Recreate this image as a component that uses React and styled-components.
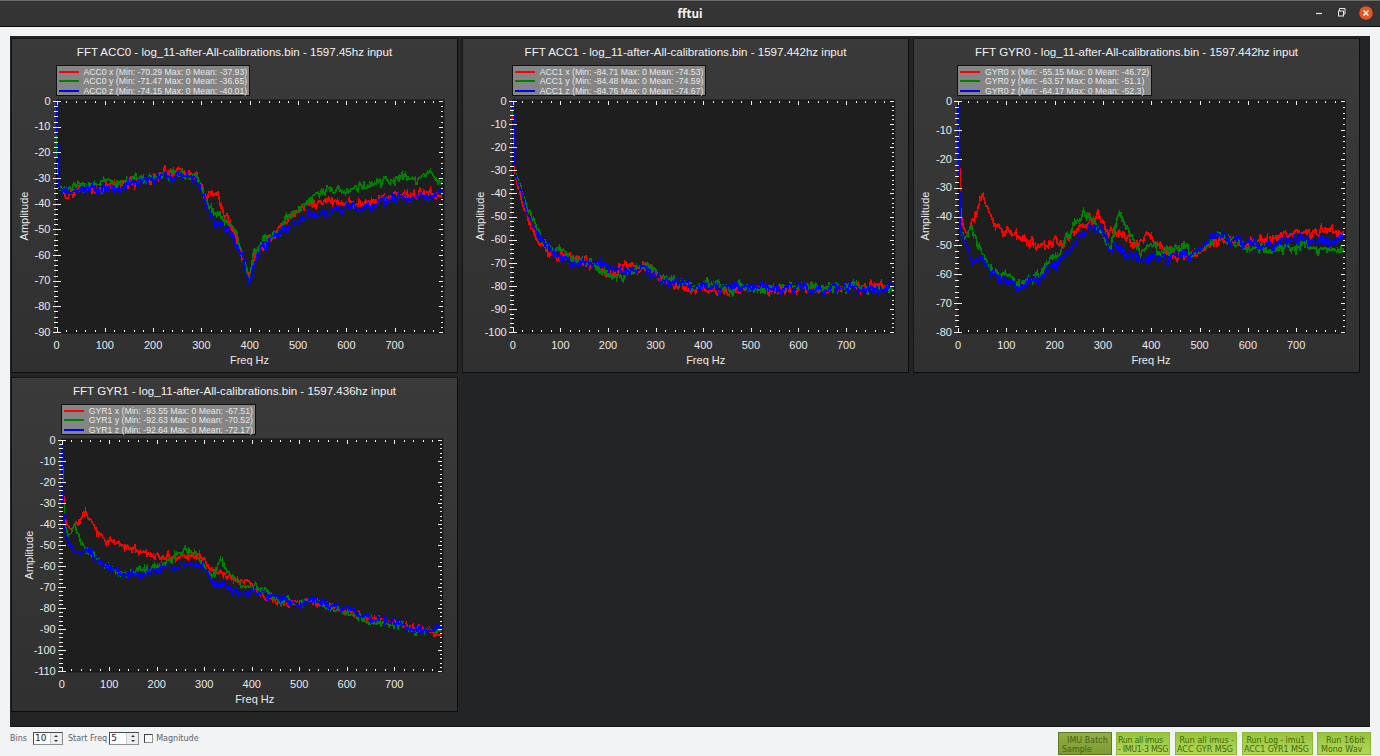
import React from "react";
import styled, { createGlobalStyle } from "styled-components";

const GlobalStyle = createGlobalStyle`
  html, body { margin: 0; padding: 0; background: #f2f3f5; overflow: hidden; }
  * { box-sizing: border-box; }
`;

const RED = "#ff0000";
const GREEN = "#008000";
const BLUE = "#0000ff";

const CHARTS = [
  {
    name: "ACC0",
    title: "FFT ACC0 - log_11-after-All-calibrations.bin - 1597.45hz input",
    plotLeft: 44.5,
    plotWidth: 386.5,
    minDb: -90,
    noise: 2,
    legend: [
      "ACC0 x (Min: -70.29 Max: 0 Mean: -37.93)",
      "ACC0 y (Min: -71.47 Max: 0 Mean: -36.65)",
      "ACC0 z (Min: -74.15 Max: 0 Mean: -40.01)",
    ],
    red: [[0, 0], [2, -20], [6, -34], [20, -37], [60, -34], [120, -33], [200, -30], [250, -26], [290, -30], [310, -37], [333, -35], [345, -43], [370, -50], [385, -60], [398, -69], [410, -60], [430, -55], [470, -47], [520, -40], [560, -38], [620, -40], [700, -37], [790, -36]],
    green: [[0, 0], [2, -25], [6, -33], [20, -35], [60, -33], [120, -31], [200, -30], [255, -28], [290, -29], [310, -38], [330, -44], [370, -50], [385, -59], [398, -70], [410, -60], [430, -55], [470, -48], [510, -40], [557, -34], [600, -35], [650, -32], [700, -31], [750, -30], [774, -27], [790, -31]],
    blue: [[0, 0], [2, -15], [6, -34], [20, -36], [60, -34], [120, -33], [200, -31], [255, -28], [290, -30], [310, -40], [325, -47], [360, -53], [385, -60], [399, -73], [412, -62], [429, -56], [470, -51], [499, -47], [560, -43], [636, -41], [700, -38], [790, -36]],
  },
  {
    name: "ACC1",
    title: "FFT ACC1 - log_11-after-All-calibrations.bin - 1597.442hz input",
    plotLeft: 49.7,
    plotWidth: 381,
    minDb: -100,
    noise: 2.2,
    legend: [
      "ACC1 x (Min: -84.71 Max: 0 Mean: -74.53)",
      "ACC1 y (Min: -84.48 Max: 0 Mean: -74.59)",
      "ACC1 z (Min: -84.76 Max: 0 Mean: -74.67)",
    ],
    red: [[0, 0], [3, -18], [6, -34], [15, -40], [30, -50], [50, -60], [75, -65], [100, -67], [150, -69], [200, -74], [220, -75], [238, -69], [250, -70], [262, -73], [275, -71], [300, -75], [340, -79], [400, -81], [500, -81], [600, -81], [700, -81], [790, -80]],
    green: [[0, 0], [3, -14], [6, -31], [15, -36], [30, -47], [50, -56], [75, -63], [100, -65], [150, -69], [200, -75], [225, -77], [250, -74], [280, -70], [310, -75], [350, -79], [400, -80], [500, -81], [600, -80], [700, -81], [790, -81]],
    blue: [[0, 0], [3, -8], [6, -32], [15, -38], [30, -48], [50, -57], [75, -63], [100, -67], [150, -70], [200, -72], [225, -75], [240, -72], [260, -73], [275, -71], [300, -76], [340, -80], [400, -81], [500, -81], [600, -81], [700, -81], [790, -81]],
  },
  {
    name: "GYR0",
    title: "FFT GYR0 - log_11-after-All-calibrations.bin - 1597.442hz input",
    plotLeft: 44,
    plotWidth: 386.5,
    minDb: -80,
    noise: 2,
    legend: [
      "GYR0 x (Min: -55.15 Max: 0 Mean: -46.72)",
      "GYR0 y (Min: -63.57 Max: 0 Mean: -51.1)",
      "GYR0 z (Min: -64.17 Max: 0 Mean: -52.3)",
    ],
    red: [[0, 0], [3, -20], [6, -40], [15, -46], [30, -42], [40, -38], [52, -32], [62, -38], [80, -43], [110, -46], [150, -49], [180, -50], [200, -48], [220, -50], [240, -44], [270, -42], [290, -40], [310, -45], [340, -45], [360, -49], [390, -46], [420, -50], [460, -53], [490, -53], [520, -50], [540, -47], [600, -49], [650, -47], [700, -46], [790, -45]],
    green: [[0, 0], [3, -30], [6, -44], [15, -48], [28, -44], [40, -51], [55, -55], [70, -58], [100, -61], [130, -62], [170, -61], [185, -55], [210, -53], [230, -46], [260, -39], [275, -39], [290, -44], [315, -50], [332, -39], [350, -44], [375, -52], [395, -50], [420, -54], [465, -49], [480, -54], [510, -50], [540, -46], [600, -51], [700, -51], [790, -51]],
    blue: [[0, 0], [3, -30], [6, -45], [20, -52], [30, -56], [50, -54], [65, -59], [90, -61], [120, -63], [170, -62], [200, -57], [225, -54], [240, -48], [270, -44], [295, -43], [315, -52], [330, -50], [345, -55], [400, -55], [450, -54], [480, -54], [520, -49], [540, -46], [600, -50], [700, -48], [790, -48]],
  },
  {
    name: "GYR1",
    title: "FFT GYR1 - log_11-after-All-calibrations.bin - 1597.436hz input",
    plotLeft: 49.7,
    plotWidth: 380,
    minDb: -110,
    noise: 1.8,
    legend: [
      "GYR1 x (Min: -93.55 Max: 0 Mean: -67.51)",
      "GYR1 y (Min: -92.63 Max: 0 Mean: -70.52)",
      "GYR1 z (Min: -92.64 Max: 0 Mean: -72.17)",
    ],
    red: [[0, 0], [3, -20], [6, -38], [15, -42], [25, -41], [40, -38], [50, -34], [60, -38], [75, -43], [90, -47], [110, -49], [150, -52], [170, -53], [200, -55], [210, -56], [230, -56], [240, -55], [280, -55], [300, -57], [310, -60], [320, -63], [335, -62], [350, -65], [385, -66], [400, -69], [420, -73], [460, -76], [480, -78], [520, -76], [560, -78], [620, -83], [660, -85], [700, -87], [750, -90], [790, -92]],
    green: [[0, 0], [3, -25], [6, -40], [15, -46], [28, -41], [40, -50], [55, -54], [70, -55], [90, -60], [110, -62], [140, -63], [170, -62], [200, -60], [220, -59], [260, -52], [280, -53], [300, -60], [320, -64], [333, -57], [350, -63], [380, -69], [410, -71], [450, -75], [465, -76], [490, -78], [525, -75], [560, -79], [620, -84], [660, -87], [700, -88], [740, -91], [790, -90]],
    blue: [[0, 0], [3, -30], [6, -42], [15, -50], [25, -53], [40, -54], [55, -52], [70, -56], [90, -59], [110, -61], [150, -64], [170, -65], [200, -62], [230, -61], [250, -59], [290, -59], [310, -64], [320, -69], [335, -69], [360, -73], [390, -73], [420, -73], [460, -76], [500, -79], [530, -76], [560, -78], [620, -82], [660, -85], [700, -87], [740, -90], [790, -90]],
  },
];

const PLOT_TOP = 5;
const PLOT_HEIGHT = 231;

// small seeded generator so the traces look the same on every load
const makeRandom = (seed) => () => {
  seed = (seed + 0x6d2b79f5) | 0;
  let t = Math.imul(seed ^ (seed >>> 15), 1 | seed);
  t = (t + Math.imul(t ^ (t >>> 7), 61 | t)) ^ t;
  return ((t ^ (t >>> 14)) >>> 0) / 4294967296;
};

const levelAt = (points, hz) => {
  for (let i = 1; i < points.length; i++) {
    if (hz <= points[i][0]) {
      const [x0, y0] = points[i - 1];
      const [x1, y1] = points[i];
      return y0 + ((y1 - y0) * (hz - x0)) / (x1 - x0);
    }
  }
  return points[points.length - 1][1];
};

const tracePath = (points, chart, seed) => {
  const random = makeRandom(seed);
  const hzScale = chart.plotWidth / 800;
  const dbScale = PLOT_HEIGHT / -chart.minDb;
  let path = "";
  let drift = 0;
  for (let hz = 0; hz <= 798; hz += 2) {
    drift = drift * 0.7 + (random() - 0.5) * chart.noise;
    const jitter = hz < 8 ? 0 : drift + (random() - 0.5) * chart.noise * 1.3;
    const x = chart.plotLeft + hz * hzScale;
    const y = PLOT_TOP - (levelAt(points, hz) + jitter) * dbScale;
    path += `${path ? "L" : "M"}${x.toFixed(1)} ${y.toFixed(1)}`;
  }
  return path;
};

const Page = styled.div`
  width: 1380px;
  height: 756px;
  display: flex;
  flex-direction: column;
  background: #f2f3f5;
`;

const TitleBar = styled.header`
  height: 27px;
  flex: none;
  display: flex;
  align-items: center;
  justify-content: center;
  background: #353434;
  border-top: 1px solid #6c6c6c;
  border-bottom: 1px solid #0c0c0c;
  position: relative;
`;

const WindowTitle = styled.span`
  font: bold 11.5px "Open Sans", sans-serif;
  color: #f4f4f4;
`;

const WindowControls = styled.div`
  position: absolute;
  right: 7px;
  top: 5px;
  display: flex;
  align-items: center;
  gap: 12px;
`;

const Workspace = styled.main`
  flex: 1;
  margin: 9px 10px 0;
  padding: 2px 10px 0 1px;
  background: #232425;
  display: grid;
  grid-template-columns: repeat(3, 447px);
  grid-auto-rows: 335px;
  column-gap: 4px;
  row-gap: 4px;
  align-content: start;
  border-bottom: 1px solid #15161a;
`;

const Panel = styled.section`
  display: flex;
  flex-direction: column;
  background: linear-gradient(#3a3a3a, #303030);
  border: 1px solid #0d0d0d;
  border-left-color: #161616;
  border-top-color: #161616;
`;

const PanelTitle = styled.h2`
  margin: 0;
  height: 26px;
  flex: none;
  font: 400 11.55px "Liberation Sans", Arial, sans-serif;
  line-height: 26px;
  text-align: center;
  color: #f2f2f2;
  white-space: nowrap;
`;

const Legend = styled.div`
  align-self: flex-start;
  flex: none;
  height: 31px;
  margin-left: ${(p) => p.$left}px;
  padding: 1px 2px 0;
  background: #858585;
  border: 1px solid #101010;
  display: flex;
  flex-direction: column;
`;

const LegendRow = styled.div`
  height: 9.6px;
  display: flex;
  align-items: center;
  gap: 5px;
  font: 8.7px "Liberation Sans", Arial, sans-serif;
  color: #e8e8e8;
  white-space: nowrap;
`;

const LegendLine = styled.span`
  width: 20px;
  height: 2px;
  flex: none;
  background: ${(p) => p.$color};
`;

const ChartSvg = styled.svg`
  display: block;
  flex: none;
  width: 445px;
  height: 276px;
`;

const BottomBar = styled.footer`
  height: 29px;
  flex: none;
  padding: 5px 9px 1px 10px;
  display: flex;
  align-items: flex-start;
  font: 8px "DejaVu Sans", sans-serif;
  color: #59626c;
`;

const Label = styled.span`
  margin: 2px ${(p) => p.$gap ?? 6}px 0 0;
`;

const SpinBox = styled.div`
  width: 30px;
  height: 13px;
  margin-right: 5px;
  display: flex;
  background: #fff;
  border: 1px solid #8b8f94;
  border-top-color: #4a4d50;
  border-left-color: #4a4d50;
  color: #222;
  font-size: 9px;
`;

const SpinValue = styled.span`
  flex: 1;
  padding-left: 1px;
  line-height: 11px;
`;

const SpinArrows = styled.span`
  width: 12px;
  display: flex;
  flex-direction: column;
  background: #eceef0;
  border-left: 1px solid #c8ccd0;
`;

const SpinArrow = styled.span`
  flex: 1;
  display: flex;
  align-items: center;
  justify-content: center;
  &::before {
    content: "";
    border-left: 2px solid transparent;
    border-right: 2px solid transparent;
    ${(p) => (p.$down ? "border-top: 2px solid #333;" : "border-bottom: 2px solid #333;")}
  }
`;

const Check = styled.span`
  width: 9px;
  height: 9px;
  margin: 2px 3px 0 0;
  background: #f8f8f8;
  border: 1px solid #8b8f94;
  border-top-color: #3f4245;
  border-left-color: #3f4245;
`;

const Actions = styled.div`
  margin-left: auto;
  display: flex;
  align-items: flex-start;
`;

const ActionButton = styled.button`
  width: ${(p) => p.$width}px;
  height: 23px;
  margin-left: ${(p) => p.$gap}px;
  padding: 2px 0 0 ${(p) => p.$pad ?? 2}px;
  overflow: hidden;
  text-align: left;
  white-space: pre;
  font: 8px/9px "DejaVu Sans", sans-serif;
  letter-spacing: ${(p) => p.$tight ?? 0}px;
  color: ${(p) => (p.$active ? "#4a5f17" : "#3f6a06")};
  background: ${(p) =>
    p.$active
      ? "linear-gradient(#92ad45, #7c9c30)"
      : "linear-gradient(#98c43c, #b0d65a)"};
  border: 1px solid ${(p) => (p.$active ? "#5f7a24" : "#8cb83a")};
`;

const Chart = ({ chart }) => {
  const { plotLeft, plotWidth, minDb } = chart;
  const plotRight = plotLeft + plotWidth;
  const plotBottom = PLOT_TOP + PLOT_HEIGHT;
  const hzScale = plotWidth / 800;
  const dbScale = PLOT_HEIGHT / -minDb;
  const ticks = [];

  for (let hz = 0; hz <= 780; hz += 20) {
    const x = Math.round(plotLeft + hz * hzScale) + 0.5;
    const len = hz % 100 === 0 ? 4 : 2;
    ticks.push(`M${x} ${PLOT_TOP}v${len}M${x} ${plotBottom}v${-len}`);
  }
  for (let db = 0; db >= minDb; db -= 2) {
    const y = Math.round(PLOT_TOP - db * dbScale) + 0.5;
    const major = db % 10 === 0;
    ticks.push(`M${plotLeft - (major ? 4 : 3)} ${y}h${major ? 8 : 4}`);
    ticks.push(`M${plotRight} ${y}h${major ? -4 : -2}`);
  }

  const xLabels = [0, 100, 200, 300, 400, 500, 600, 700];
  const yLabels = [];
  for (let db = 0; db >= minDb; db -= 10) yLabels.push(db);
  const clipId = `plot-${chart.name}`;

  return (
    <ChartSvg viewBox="0 0 445 276">
      <defs>
        <clipPath id={clipId}>
          <rect x={plotLeft - 1} y={PLOT_TOP - 1} width={plotWidth + 1} height={PLOT_HEIGHT + 2} />
        </clipPath>
      </defs>
      <rect x={plotLeft} y={PLOT_TOP - 1} width={plotWidth + 1} height={PLOT_HEIGHT + 2} fill="#1e1e1e" stroke="#141414" />
      <g clipPath={`url(#${clipId})`} fill="none" strokeWidth="1.7" shapeRendering="crispEdges">
        <path d={tracePath(chart.red, chart, 11)} stroke={RED} />
        <path d={tracePath(chart.green, chart, 23)} stroke={GREEN} />
        <path d={tracePath(chart.blue, chart, 37)} stroke={BLUE} />
      </g>
      <path d={ticks.join("")} stroke="#f4f4f4" strokeWidth="1" fill="none" shapeRendering="crispEdges" />
      <g fill="#e9e9e9" fontFamily="'Liberation Sans', Arial, sans-serif" fontSize="11">
        {yLabels.map((db) => (
          <text key={db} x={plotLeft - 6} y={PLOT_TOP - db * dbScale + 3.8} textAnchor="end">
            {db}
          </text>
        ))}
        {xLabels.map((hz) => (
          <text key={hz} x={plotLeft + hz * hzScale} y={253} textAnchor="middle">
            {hz}
          </text>
        ))}
        <text x={plotLeft + 193} y={267.5} textAnchor="middle">
          Freq Hz
        </text>
        <text
          transform={`translate(${plotLeft - 29} 120) rotate(-90)`}
          textAnchor="middle"
        >
          Amplitude
        </text>
      </g>
    </ChartSvg>
  );
};

const FftPanel = ({ chart }) => (
  <Panel>
    <PanelTitle>{chart.title}</PanelTitle>
    <Legend $left={chart.plotLeft - 1}>
      {chart.legend.map((text, i) => (
        <LegendRow key={text}>
          <LegendLine $color={[RED, GREEN, BLUE][i]} />
          {text}
        </LegendRow>
      ))}
    </Legend>
    <Chart chart={chart} />
  </Panel>
);

const SpinField = ({ value }) => (
  <SpinBox>
    <SpinValue>{value}</SpinValue>
    <SpinArrows>
      <SpinArrow />
      <SpinArrow $down />
    </SpinArrows>
  </SpinBox>
);

export default function App() {
  return (
    <Page>
      <GlobalStyle />
      <TitleBar>
        <WindowTitle>fftui</WindowTitle>
        <WindowControls>
          <svg width="8" height="4" viewBox="0 0 8 4">
            <path d="M1 2.5h6" stroke="#e8e8e8" strokeWidth="1.2" />
          </svg>
          <svg width="12" height="12" viewBox="0 0 12 12">
            <path d="M4.5 4V1.5H10V7H8" fill="none" stroke="#e8e8e8" />
            <rect x="3.5" y="4" width="5" height="5" fill="none" stroke="#e8e8e8" />
          </svg>
          <svg width="14" height="14" viewBox="0 0 14 14">
            <circle cx="7" cy="7" r="6.8" fill="#e9541f" />
            <path d="M4.6 4.6l4.8 4.8M9.4 4.6l-4.8 4.8" stroke="#fff" strokeWidth="1.4" />
          </svg>
        </WindowControls>
      </TitleBar>
      <Workspace>
        {CHARTS.map((chart) => (
          <FftPanel key={chart.name} chart={chart} />
        ))}
      </Workspace>
      <BottomBar>
        <Label>Bins</Label>
        <SpinField value="10" />
        <Label $gap={2}>Start Freq</Label>
        <SpinField value="5" />
        <Check />
        <Label>Magnitude</Label>
        <Actions>
          <ActionButton $active $width={54} $gap={0} $pad={3}>{"  IMU Batch\nSample"}</ActionButton>
          <ActionButton $width={54} $gap={4} $pad={1} $tight={-0.35}>{"Run all imus\n- IMU1-3 MSG"}</ActionButton>
          <ActionButton $width={62} $gap={5} $pad={1}>{" Run all imus -\nACC GYR MSG"}</ActionButton>
          <ActionButton $width={71} $gap={5} $pad={1} $tight={-0.1}>{" Run Log - imu1\nACC1 GYR1 MSG"}</ActionButton>
          <ActionButton $width={54} $gap={4} $pad={3}>{"  Run 16bit\nMono Wav"}</ActionButton>
        </Actions>
      </BottomBar>
    </Page>
  );
}
